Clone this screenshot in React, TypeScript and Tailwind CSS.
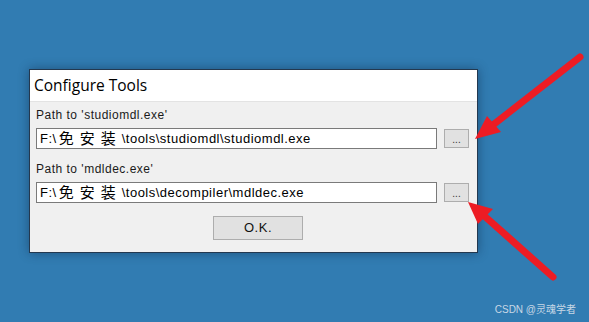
import React from 'react';

const uiFont = { fontFamily: '"Liberation Sans", "Noto Sans CJK SC", sans-serif' };

const PathRow: React.FC<{ label: string; drive: string; rest: string; top: string }> = ({ label, drive, rest, top }) => (
  <div className={top}>
    <div className="h-[14px] text-[12px] leading-[14px] tracking-[0.5px] text-[#1a1a1a]">{label}</div>
    <div className="mt-[6px] flex items-center">
      <div className="flex h-[21px] w-[401px] items-center border border-[#7a7a7a] bg-white pl-[3px] text-[13px] tracking-[0.5px] text-black">
        <span>{drive}</span>
        <span className="ml-[2px] tracking-[6px] text-[15px]" style={{ fontFamily: '"Noto Sans CJK SC", sans-serif' }}>
          免安装
        </span>
        <span>{rest}</span>
      </div>
      <button className="ml-[7px] flex h-[19px] w-[25px] items-end justify-center border border-[#adadad] bg-[#e1e1e1] pb-[2px] text-[10px] leading-none text-[#333]">
        ...
      </button>
    </div>
  </div>
);

const Arrow: React.FC<{ tail: [number, number]; tip: [number, number]; w1: [number, number]; w2: [number, number] }> = ({ tail, tip, w1, w2 }) => (
  <g>
    <line x1={tail[0]} y1={tail[1]} x2={(tip[0] + (w1[0] + w2[0]) / 2) / 2} y2={(tip[1] + (w1[1] + w2[1]) / 2) / 2} stroke="#ed1c24" strokeWidth={7} strokeLinecap="round" />
    <polygon points={`${tip[0]},${tip[1]} ${w1[0]},${w1[1]} ${w2[0]},${w2[1]}`} fill="#ed1c24" />
  </g>
);

const App: React.FC = () => {
  return (
    <div className="relative h-[322px] w-[589px] overflow-hidden bg-[#317cb2]" style={uiFont}>
      <div className="pl-[29px] pt-[69px]">
        {/* dialog */}
        <div className="w-[449px] border border-[#23384f] shadow-[0_0_10px_rgba(10,30,60,0.45)]">
          <div className="flex h-[31px] items-center bg-white pl-[4px] text-[15.5px] text-black" style={{ fontFamily: '"Open Sans", sans-serif' }}>
            Configure Tools
          </div>
          <div className="h-[151px] border-t border-[#e3e3e3] bg-[#f0f0f0] pl-[6px]">
            <PathRow top="pt-[6px]" label="Path to 'studiomdl.exe'" drive="F:\" rest="\tools\studiomdl\studiomdl.exe" />
            <PathRow top="pt-[13px]" label="Path to 'mdldec.exe'" drive="F:\" rest="\tools\decompiler\mdldec.exe" />
            <div className="pl-[177px] pt-[13px]">
              <button className="flex h-[24px] w-[90px] items-center justify-center border border-[#adadad] bg-[#e1e1e1] text-[13px] tracking-[0.5px] text-[#111]">
                O.K.
              </button>
            </div>
          </div>
        </div>
      </div>

      {/* annotation arrows */}
      <svg className="absolute left-0 top-0" width="589" height="322" viewBox="0 0 589 322">
        <Arrow tail={[580, 57]} tip={[475, 139]} w1={[487, 116]} w2={[501, 132]} />
        <Arrow tail={[553, 277]} tip={[468, 202]} w1={[493, 209]} w2={[478, 224]} />
      </svg>

      <div className="absolute bottom-[5px] right-[13px] text-[10px] text-[#c8d8e6]">CSDN @灵魂学者</div>
    </div>
  );
};

export default App;
